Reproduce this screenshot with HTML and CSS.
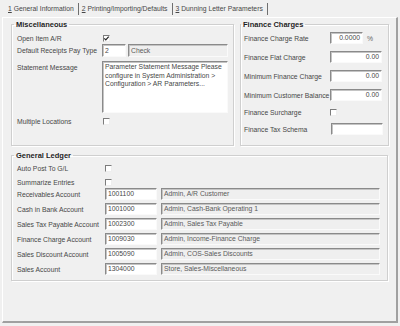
FILE: index.html
```html
<!DOCTYPE html>
<html>
<head>
<meta charset="utf-8">
<link rel="stylesheet" href="styles.css">
</head>
<body>
<div class="window">
  <div class="tabs">
    <div class="tab"><u>1</u> General Information</div>
    <div class="tab"><u>2</u> Printing/Importing/Defaults</div>
    <div class="tab"><u>3</u> Dunning Letter Parameters</div>
  </div>
  <div class="panel">
    <div class="top">
      <fieldset class="group misc">
        <legend>Miscellaneous</legend>
        <div class="row cbrow r1"><span class="lbl">Open Item A/R</span><span class="cb"><svg viewBox="0 0 7 7" width="7" height="7"><polyline points="1.3,3.3 2.8,4.9 5.7,1.6" fill="none" stroke="#222" stroke-width="1.2"/></svg></span></div>
        <div class="row r2"><span class="lbl">Default Receipts Pay Type</span><span class="inp code">2</span><span class="inp ro paytype">Check</span></div>
        <div class="row r3"><span class="lbl top-lbl">Statement Message</span><div class="inp memo">Parameter Statement Message Please<br>configure in System Administration &gt;<br>Configuration &gt; AR Parameters...</div></div>
        <div class="row cbrow r4"><span class="lbl">Multiple Locations</span><span class="cb"></span></div>
      </fieldset>
      <fieldset class="group fin">
        <legend>Finance Charges</legend>
        <div class="frow first"><span class="flbl">Finance Charge Rate</span><span class="inp num rate">0.0000</span><span class="pct">%</span></div>
        <div class="frow"><span class="flbl">Finance Flat Charge</span><span class="inp num wide">0.00</span></div>
        <div class="frow"><span class="flbl">Minimum Finance Charge</span><span class="inp num wide">0.00</span></div>
        <div class="frow"><span class="flbl">Minimum Customer Balance</span><span class="inp num wide">0.00</span></div>
        <div class="frow fcb"><span class="flbl">Finance Surcharge</span><span class="cb"></span></div>
        <div class="frow"><span class="flbl">Finance Tax Schema</span><span class="inp wide schema"></span></div>
      </fieldset>
    </div>
    <fieldset class="group gl">
      <legend>General Ledger</legend>
      <div class="row glcb g1"><span class="glbl">Auto Post To G/L</span><span class="cb"></span></div>
      <div class="row glcb g2"><span class="glbl">Summarize Entries</span><span class="cb"></span></div>
      <div class="row acct first-acct"><span class="glbl">Receivables Account</span><span class="inp accno">1001100</span><span class="inp ro desc">Admin, A/R Customer</span></div>
      <div class="row acct"><span class="glbl">Cash in Bank Account</span><span class="inp accno">1001000</span><span class="inp ro desc">Admin, Cash-Bank Operating 1</span></div>
      <div class="row acct"><span class="glbl">Sales Tax Payable Account</span><span class="inp accno">1002300</span><span class="inp ro desc">Admin, Sales Tax Payable</span></div>
      <div class="row acct"><span class="glbl">Finance Charge Account</span><span class="inp accno">1009030</span><span class="inp ro desc">Admin, Income-Finance Charge</span></div>
      <div class="row acct"><span class="glbl">Sales Discount Account</span><span class="inp accno">1005090</span><span class="inp ro desc">Admin, COS-Sales Discounts</span></div>
      <div class="row acct"><span class="glbl">Sales Account</span><span class="inp accno">1304000</span><span class="inp ro desc">Store, Sales-Miscellaneous</span></div>
    </fieldset>
  </div>
</div>
</body>
</html>
```

FILE: styles.css
```css
body {
  margin: 0;
  background: #f0f0f0;
  font-family: "Liberation Sans", Arial, sans-serif;
  font-size: 6.8px;
  color: #474747;
}
.window {
  width: 400px;
  height: 326px;
  display: flex;
  flex-direction: column;
}
.tabs {
  height: 17px;
  box-sizing: border-box;
  padding: 3px 0 0 5px;
  display: flex;
  align-items: flex-start;
}
.tab {
  padding: 0 4px 0 3px;
  border-right: 1px solid #6f6f6f;
  line-height: 12px;
  white-space: nowrap;
}
.panel {
  margin-left: 2px;
  width: 396px;
  height: 306px;
  box-sizing: border-box;
  border-left: 1px solid #ffffff;
  border-top: 1px solid #ffffff;
  border-right: 2px solid #a0a0a0;
  border-bottom: 2px solid #a0a0a0;
  padding: 2px 0 0 8px;
}
.top {
  display: flex;
  gap: 6px;
}
.group {
  margin: 0;
  padding: 0 0 0 5px;
  border: 1px solid #cfcfcf;
  box-shadow: inset 1px 1px 0 #ffffff, 1px 1px 0 #ffffff;
  box-sizing: border-box;
  min-width: 0;
  display: flex;
  flex-direction: column;
}
.group legend {
  font-weight: bold;
  font-size: 7.5px;
  line-height: 9px;
  padding: 0 2px;
  margin-left: -3px;
  color: #1e1e1e;
}
.misc { width: 223px; height: 126px; }
.fin { width: 149px; height: 126px; padding-left: 3px; }
.gl { width: 377px; height: 130px; margin-top: 5px; }

.row { display: flex; align-items: center; }
.lbl { width: 85px; flex: none; white-space: nowrap; }
.top-lbl { align-self: flex-start; padding-top: 3px; }
.r1 { margin-top: 4px; height: 10px; }
.r2 { margin-top: 1px; height: 13px; }
.r3 { margin-top: 4px; align-items: flex-start; }
.r4 { margin-top: 3px; height: 10px; }
.cbrow .cb { margin-left: 1px; }

.cb {
  width: 7px;
  height: 7px;
  box-sizing: border-box;
  background: #ffffff;
  border: 1px solid;
  border-color: #7c7c7c #eeeeee #eeeeee #7c7c7c;
  display: block;
  flex: none;
  position: relative;
}
.cb svg { position: absolute; left: -1px; top: -1px; }

.inp {
  display: block;
  box-sizing: border-box;
  background: #ffffff;
  border: 1px solid;
  border-color: #8a8a8a #fafafa #fafafa #8a8a8a;
  box-shadow: inset 1px 1px 0 #c4c4c4;
  padding: 0 2px;
  white-space: nowrap;
  overflow: hidden;
  flex: none;
}
.inp.ro { background: #efefef; color: #5a5a5a; }
.code { width: 24px; height: 13px; line-height: 11px; }
.paytype { width: 100px; height: 13px; line-height: 11px; margin-left: 2px; }
.memo {
  width: 126px;
  height: 52px;
  line-height: 8.6px;
  padding-top: 1px;
  white-space: normal;
}

.frow {
  display: flex;
  align-items: center;
  height: 12px;
  margin-top: 7px;
}
.frow.first { margin-top: 3px; }
.frow.fcb { height: 8px; }
.flbl { width: 86px; flex: none; white-space: nowrap; }
.num { text-align: right; line-height: 10px; height: 12px; }
.rate { width: 33px; }
.wide { width: 52px; height: 12px; }
.schema { margin-left: 1px; }
.pct { margin-left: 4px; color: #666; }

.glbl { width: 88px; flex: none; white-space: nowrap; }
.glcb { height: 10px; }
.g1 { margin-top: 3px; }
.g2 { margin-top: 4px; }
.acct { height: 12px; margin-top: 3px; }
.first-acct { margin-top: 1px; }
.accno { width: 52px; height: 12px; line-height: 10px; }
.desc { width: 219px; height: 12px; line-height: 10px; margin-left: 4px; }
```
